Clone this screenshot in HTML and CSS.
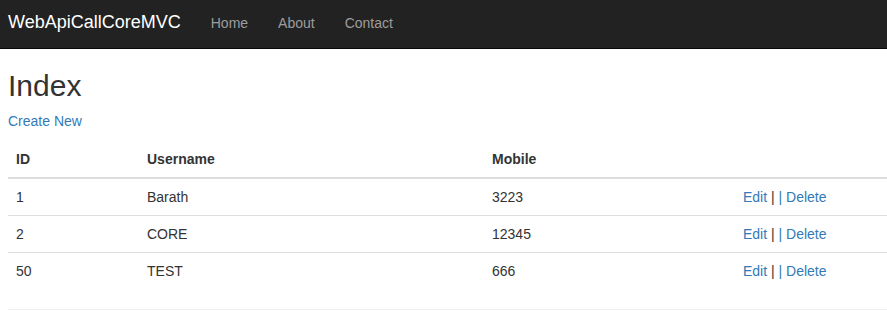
FILE: index.html
```html
<!DOCTYPE html>
<html lang="en">

<head>
    <meta charset="UTF-8">
    <meta name="viewport" content="width=device-width, initial-scale=1.0">
    <title>Index - WebApiCallCoreMVC</title>
    <link rel="stylesheet" href="styles.css">
</head>

<body>

    <nav class="navbar">
        <a class="navbar-brand" href="#">WebApiCallCoreMVC</a>
        <ul class="navbar-nav">
            <li><a href="#">Home</a></li>
            <li><a href="#">About</a></li>
            <li><a href="#">Contact</a></li>
        </ul>
    </nav>

    <div class="body-content">
        <h2>Index</h2>
        <p class="actions">
            <a href="#">Create New</a>
        </p>

        <table class="table">
            <thead>
                <tr>
                    <th class="col-id">ID</th>
                    <th class="col-name">Username</th>
                    <th class="col-mobile">Mobile</th>
                    <th></th>
                </tr>
            </thead>
            <tbody>
                <tr>
                    <td>1</td>
                    <td>Barath</td>
                    <td>3223</td>
                    <td><a href="#">Edit</a> | <a href="#">|</a> <a href="#">Delete</a></td>
                </tr>
                <tr>
                    <td>2</td>
                    <td>CORE</td>
                    <td>12345</td>
                    <td><a href="#">Edit</a> | <a href="#">|</a> <a href="#">Delete</a></td>
                </tr>
                <tr>
                    <td>50</td>
                    <td>TEST</td>
                    <td>666</td>
                    <td><a href="#">Edit</a> | <a href="#">|</a> <a href="#">Delete</a></td>
                </tr>
            </tbody>
        </table>

        <hr />
    </div>

</body>

</html>
```

FILE: styles.css
```css
* {
    box-sizing: border-box;
}

body {
    margin: 0;
    font-family: "Liberation Sans", Arial, sans-serif;
    font-size: 14px;
    line-height: 20px;
    color: #333;
    background-color: #fff;
    overflow: hidden;
}

a {
    color: #337ab7;
    text-decoration: none;
}

/* top bar */
.navbar {
    height: 49px;
    padding: 12px 0 0 8px;
    display: flex;
    align-items: baseline;
    background-color: #222;
    border-bottom: 1px solid #080808;
}

.navbar-brand {
    padding-right: 15px;
    font-size: 18px;
    line-height: 20px;
    color: #fff;
}

.navbar-nav {
    margin: 0;
    padding: 0;
    list-style: none;
    display: flex;
}

.navbar-nav a {
    display: block;
    padding: 0 15px;
    color: #9d9d9d;
}

/* page */
.body-content {
    padding-left: 8px;
}

h2 {
    margin: 20px 0 9px;
    font-size: 30px;
    font-weight: 500;
    line-height: 33px;
}

.actions {
    margin: 0 0 10px;
}

.table {
    width: 100%;
    margin-bottom: 20px;
    border-collapse: collapse;
    border-spacing: 0;
}

.table th,
.table td {
    padding: 8px;
    text-align: left;
    vertical-align: top;
    line-height: 20px;
}

.table th {
    font-weight: bold;
    border-bottom: 2px solid #ddd;
}

.table td {
    border-top: 1px solid #ddd;
}

.table tbody tr:first-child td {
    border-top: 0;
}

.col-id {
    width: 131px;
}

.col-name {
    width: 345px;
}

.col-mobile {
    width: 251px;
}

hr {
    margin: 0;
    border: 0;
    border-top: 1px solid #eee;
}
```
